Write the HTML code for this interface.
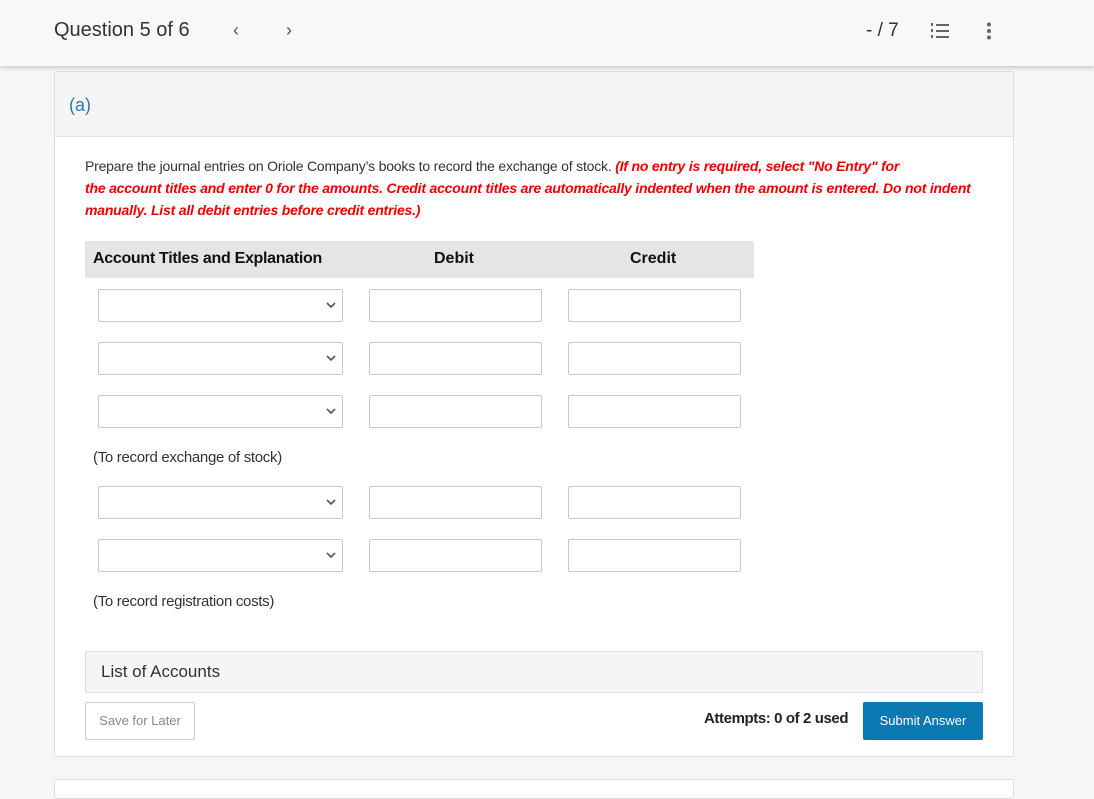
<!DOCTYPE html>
<html><head><style>
*{box-sizing:border-box;margin:0;padding:0}
body{width:1094px;height:794px;overflow:hidden;background:#f6f6f6;font-family:"Liberation Sans",sans-serif;color:#333;position:relative}
.top{position:absolute;left:0;top:0;width:1094px;height:66px;background:#f8f8f8;box-shadow:0 2px 4px rgba(0,0,0,.18)}
.a{position:absolute;white-space:nowrap}
.card{position:absolute;left:54px;top:71px;width:960px;height:686px;background:#fff;border:1px solid #ddd;border-radius:3px}
.ch{position:absolute;left:0;top:0;width:958px;height:65px;background:#f5f5f5;border-bottom:1px solid #e0e0e0}
.box{position:absolute;height:33px;background:#fff;border:1px solid #c8c8c8;border-radius:2px}
.red{color:#e00;font-style:italic;font-weight:bold}
</style></head><body>
<div class="top">
<div class="a" style="left:54px;top:19px;font-size:20px;color:#333">Question 5 of 6</div>
<div class="a" style="left:233px;top:20px;font-size:18px;color:#555">&#8249;</div>
<div class="a" style="left:286px;top:20px;font-size:18px;color:#555">&#8250;</div>
<div class="a" style="left:866px;top:20px;font-size:19px;color:#333">- / 7</div>
<svg class="a" style="left:930px;top:22px" width="20" height="18"><g fill="#666"><rect x="6" y="2" width="13" height="2"/><rect x="6" y="8" width="13" height="2"/><rect x="6" y="14" width="13" height="2"/><rect x="1" y="1" width="2" height="3"/><rect x="1" y="7" width="2" height="3"/><rect x="1" y="13" width="2" height="3"/></g></svg>
<svg class="a" style="left:986px;top:22px" width="6" height="18"><g fill="#666"><circle cx="3" cy="2.5" r="2"/><circle cx="3" cy="9" r="2"/><circle cx="3" cy="15.5" r="2"/></g></svg>
</div>
<div class="card"><div class="ch"></div></div>
<div class="a" style="left:69px;top:95px;font-size:18px;color:#2a7ab0">(a)</div>
<div class="a" style="left:85px;top:155px;font-size:14px;line-height:22px;letter-spacing:-0.2px">Prepare the journal entries on Oriole Company’s books to record the exchange of stock. <span class="red">(If no entry is required, select "No Entry" for<br>the account titles and enter 0 for the amounts. Credit account titles are automatically indented when the amount is entered. Do not indent<br>manually. List all debit entries before credit entries.)</span></div>
<div class="a" style="left:85px;top:241px;width:669px;height:37px;background:#e5e5e5"></div>
<div class="a" style="left:93px;top:250px;font-size:16px;font-weight:bold;color:#111;letter-spacing:-0.3px">Account Titles and Explanation</div>
<div class="a" style="left:434px;top:250px;font-size:16px;font-weight:bold;color:#111">Debit</div>
<div class="a" style="left:630px;top:250px;font-size:16px;font-weight:bold;color:#111">Credit</div>

<div class="box" style="left:98px;top:289px;width:245px"></div><div class="box" style="left:369px;top:289px;width:173px"></div><div class="box" style="left:568px;top:289px;width:173px"></div>
<div class="box" style="left:98px;top:342px;width:245px"></div><div class="box" style="left:369px;top:342px;width:173px"></div><div class="box" style="left:568px;top:342px;width:173px"></div>
<div class="box" style="left:98px;top:395px;width:245px"></div><div class="box" style="left:369px;top:395px;width:173px"></div><div class="box" style="left:568px;top:395px;width:173px"></div>
<div class="a" style="left:93px;top:449px;font-size:15px;letter-spacing:-0.3px">(To record exchange of stock)</div>
<div class="box" style="left:98px;top:486px;width:245px"></div><div class="box" style="left:369px;top:486px;width:173px"></div><div class="box" style="left:568px;top:486px;width:173px"></div>
<div class="box" style="left:98px;top:539px;width:245px"></div><div class="box" style="left:369px;top:539px;width:173px"></div><div class="box" style="left:568px;top:539px;width:173px"></div>
<div class="a" style="left:93px;top:593px;font-size:15px;letter-spacing:-0.3px">(To record registration costs)</div>
<svg class="a" style="left:326px;top:302px" width="10" height="260"><g fill="none" stroke="#555" stroke-width="1.6"><path d="M1 1l4 4 4-4"/><path d="M1 54l4 4 4-4"/><path d="M1 107l4 4 4-4"/><path d="M1 198l4 4 4-4"/><path d="M1 251l4 4 4-4"/></g></svg>

<div class="a" style="left:85px;top:651px;width:898px;height:42px;background:#f5f5f5;border:1px solid #ddd;border-radius:2px"></div>
<div class="a" style="left:101px;top:662px;font-size:17px;color:#333">List of Accounts</div>
<div class="a" style="left:85px;top:702px;width:110px;height:38px;border:1px solid #ccc;border-radius:2px;background:#fff;font-size:13px;color:#888;text-align:center;line-height:36px">Save for Later</div>
<div class="a" style="left:704px;top:710px;font-size:15px;font-weight:bold;color:#222;letter-spacing:-0.4px">Attempts: 0 of 2 used</div>
<div class="a" style="left:863px;top:702px;width:120px;height:38px;background:#0a78b1;border-radius:2px;color:#fff;font-size:13px;text-align:center;line-height:38px">Submit Answer</div>
<div class="a" style="left:54px;top:779px;width:960px;height:20px;background:#fff;border:1px solid #ddd;border-radius:3px"></div>
</body></html>
